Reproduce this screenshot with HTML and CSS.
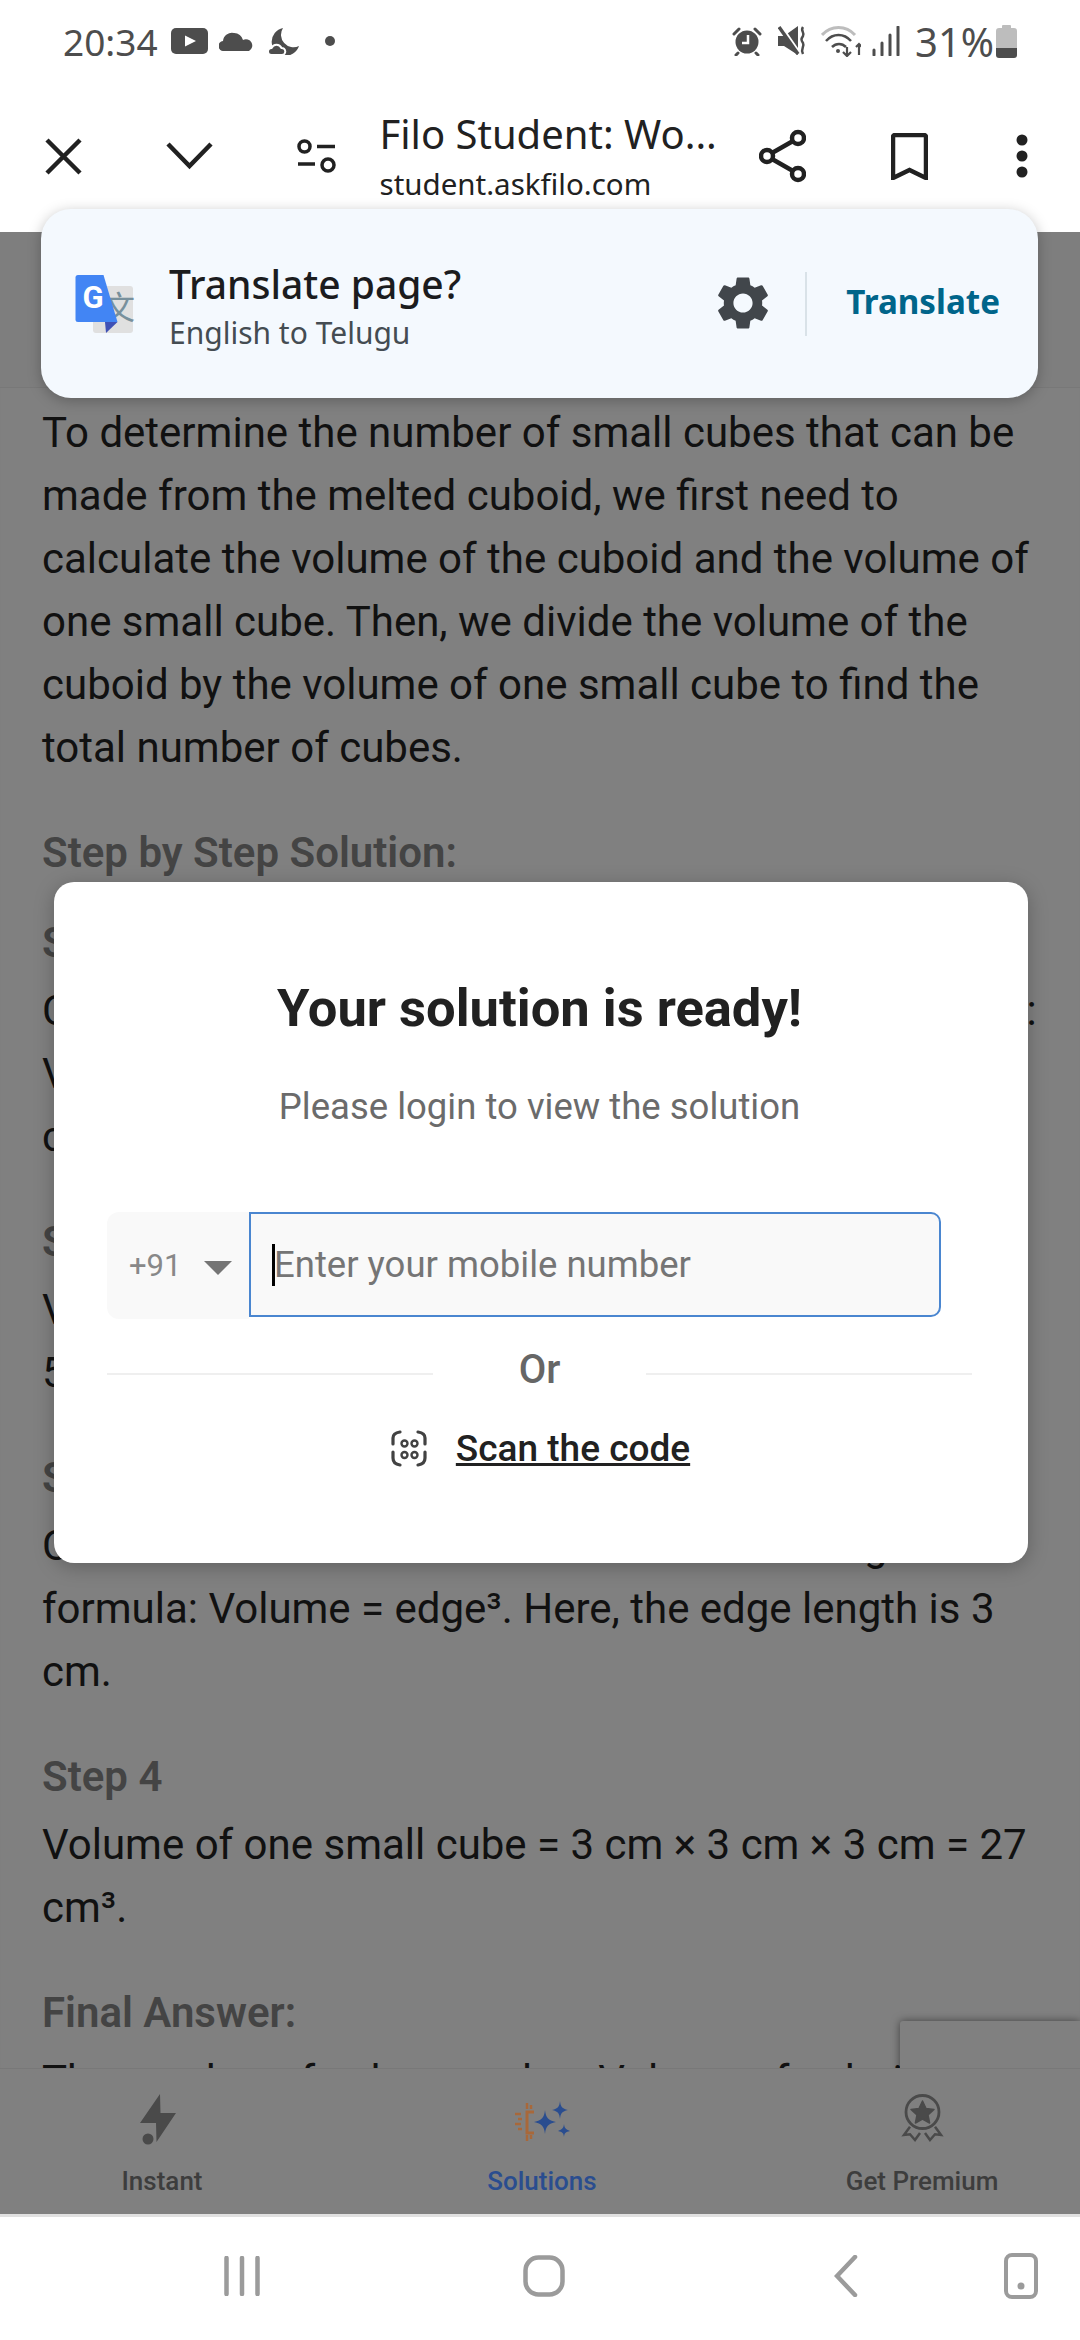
FILE: index.html
```html
<!DOCTYPE html>
<html lang="en">

<head>
    <meta charset="UTF-8">
    <meta name="viewport" content="width=device-width, initial-scale=1.0">
    <title>Filo Student</title>
    <link rel="stylesheet" href="styles.css">
</head>

<body>
    <div class="screen">

        <header class="chrome">
            <div class="status-bar">
                <span class="clock">20:34</span>
                <svg class="st-yt" width="37" height="26" viewBox="0 0 37 26">
                    <rect width="37" height="26" rx="5" fill="#4d4d4d" />
                    <path d="M14 7.500 25 13 14 18.500z" fill="#fff" />
                </svg>
                <svg class="st-cloud" width="35" height="20" viewBox="0 0 35 20">
                    <path d="M5 20a5 5 0 0 1-1-10 9 9 0 0 1 11-8 9 9 0 0 1 9 7 5.500 5.500 0 0 1 6 11z" fill="#4d4d4d" />
                </svg>
                <svg class="st-moon" width="31" height="27" viewBox="0 0 31 27">
                    <path d="M15 0A14 14 0 1 0 31 18 12.500 12.500 0 0 1 15 0z" fill="#4d4d4d" />
                    <path d="M3.500 27a3.500 3.500 0 0 1 0-7 5.500 5.500 0 0 1 10 0 3.500 3.500 0 0 1 .5 7z" fill="#4d4d4d" stroke="#fff" stroke-width="2" />
                </svg>
                <span class="st-dot"></span>

                <svg class="st-alarm" width="30" height="30" viewBox="0 0 30 30">
                    <circle cx="15" cy="16" r="11.500" fill="#4d4d4d" />
                    <path d="M16 9v8h-6" fill="none" stroke="#fff" stroke-width="2.500" />
                    <path d="M2 8 7 3M28 8 23 3M6 27l-2 2M24 27l2 2" stroke="#4d4d4d" stroke-width="3" stroke-linecap="round" />
                </svg>
                <svg class="st-mute" width="29" height="30" viewBox="0 0 29 30">
                    <path d="M0 10h6L20 0v29L6 20H0z" fill="#4d4d4d" />
                    <path d="M3 0l20 29" stroke="#fff" stroke-width="3" />
                    <path d="M1 1l19 27" stroke="#4d4d4d" stroke-width="3.500" />
                    <path d="M25 1c-3 4 2 5 0 9-2 3-2 4 0 7 2 4-3 5 0 11" fill="none" stroke="#4d4d4d" stroke-width="2.500" />
                </svg>
                <svg class="st-wifi" width="40" height="32" viewBox="0 0 40 32">
                    <path d="M1 10C10 0 25 0 34 10" fill="none" stroke="#bdbdbd" stroke-width="3" />
                    <path d="M5 16C12 8 23 8 30 16" fill="none" stroke="#4d4d4d" stroke-width="2.500" />
                    <path d="M11 22c4-4 10-4 14 0" fill="none" stroke="#4d4d4d" stroke-width="2.500" />
                    <circle cx="17" cy="26" r="2" fill="#4d4d4d" />
                    <path d="M26 22v9m-4-4 4 4 4-4M38 30V19m-3 3 3-3 3 3" fill="none" stroke="#4d4d4d" stroke-width="2.200" />
                </svg>
                <svg class="st-signal" width="28" height="30" viewBox="0 0 28 30">
                    <path d="M2 24v5M10 17v12M18 9v20M26 1v28" stroke="#4d4d4d" stroke-width="3" stroke-linecap="round" />
                </svg>
                <span class="battery-pct">31%</span>
                <svg class="st-batt" width="21" height="33" viewBox="0 0 21 33">
                    <path d="M6 3V1a1 1 0 0 1 1-1h7a1 1 0 0 1 1 1v2h3a3 3 0 0 1 3 3v17H0V6a3 3 0 0 1 3-3z" fill="#bdbdbd" />
                    <path d="M0 23h21v7a3 3 0 0 1-3 3H3a3 3 0 0 1-3-3z" fill="#4d4d4d" />
                </svg>
            </div>

            <div class="toolbar">
                <button class="tool">
                    <svg width="37" height="37" viewBox="0 0 37 37">
                        <path d="M2 2l33 33M35 2 2 35" stroke="#212121" stroke-width="4.500" />
                    </svg>
                </button>
                <button class="tool">
                    <svg width="47" height="28" viewBox="0 0 47 28">
                        <path d="M2 2l21.500 22L45 2" fill="none" stroke="#212121" stroke-width="4.500" />
                    </svg>
                </button>
                <button class="tool">
                    <svg width="39" height="34" viewBox="0 0 39 34">
                        <circle cx="7.500" cy="7.500" r="5.500" fill="none" stroke="#212121" stroke-width="3.500" />
                        <circle cx="31" cy="26" r="6" fill="none" stroke="#212121" stroke-width="3.500" />
                        <path d="M20 7.500h18M1 25h17" stroke="#212121" stroke-width="3.500" />
                    </svg>
                </button>
                <div class="page-title">
                    <div class="page-name">Filo Student: Wo...</div>
                    <div class="page-url">student.askfilo.com</div>
                </div>
                <button class="tool">
                    <svg width="47" height="54" viewBox="0 0 47 54">
                        <circle cx="39" cy="9" r="6" fill="none" stroke="#212121" stroke-width="4.500" />
                        <circle cx="8" cy="27" r="6" fill="none" stroke="#212121" stroke-width="4.500" />
                        <circle cx="39" cy="45" r="6" fill="none" stroke="#212121" stroke-width="4.500" />
                        <path d="M13 24 34 12M13 30l21 12" stroke="#212121" stroke-width="4.500" />
                    </svg>
                </button>
                <button class="tool">
                    <svg width="37" height="47" viewBox="0 0 37 47">
                        <path d="M2 45V4a2 2 0 0 1 2-2h29a2 2 0 0 1 2 2v41L18.500 37z" fill="none" stroke="#212121" stroke-width="4.500" />
                    </svg>
                </button>
                <button class="tool tool-last">
                    <svg width="12" height="44" viewBox="0 0 12 44">
                        <circle cx="6" cy="6" r="5.500" fill="#212121" />
                        <circle cx="6" cy="22" r="5.500" fill="#212121" />
                        <circle cx="6" cy="38" r="5.500" fill="#212121" />
                    </svg>
                </button>
            </div>
        </header>

        <div class="page">
            <div class="site-header"></div>
            <main class="article">
                <p>To determine the number of small cubes that can be made from the melted cuboid, we first need to calculate the volume of the cuboid and the volume of one small cube. Then, we divide the volume of the cuboid by the volume of one small cube to find the total number of cubes.</p>
                <h3 class="sol-head">Step by Step Solution:</h3>

                <section class="step step-first">
                    <h4>Step 1</h4>
                    <p>Calculate the volume of the cuboid using the formula:<br>Volume = length × width × height. Here, for the<br>cuboid, the sides are known.</p>
                </section>
                <section class="step">
                    <h4>Step 2</h4>
                    <p>Volume of cuboid = 18 cm × 15 cm × 20 cm =<br>5400 cm³.</p>
                </section>
                <section class="step">
                    <h4>Step 3</h4>
                    <p>Calculate the volume of one small cube using the formula: Volume = edge³. Here, the edge length is 3 cm.</p>
                </section>
                <section class="step">
                    <h4>Step 4</h4>
                    <p>Volume of one small cube = 3 cm × 3 cm × 3 cm = 27 cm³.</p>
                </section>
                <section class="step">
                    <h4>Final Answer:</h4>
                    <p>The number of cubes made = Volume of cuboid / Volume of one small cube.</p>
                </section>
                <div class="recaptcha"></div>
            </main>

            <nav class="tabs">
                <a class="tab">
                    <svg width="70" height="62" viewBox="0 0 70 62">
                        <path d="M33 1 13 30h16l.5 19L49 20H33.500z" fill="#4a4a4a" />
                        <circle cx="21" cy="46" r="5.500" fill="#4a4a4a" />
                    </svg>
                    <span>Instant</span>
                </a>
                <a class="tab tab-on">
                    <svg width="70" height="62" viewBox="0 0 70 62">
                        <path d="M38 17c1 8 3 10 11 12-8 2-10 4-11 12-1-8-3-10-11-12 8-2 10-4 11-12zM53 8c.7 6 2 7.500 8 9-6 1.500-7.300 3-8 9-.7-6-2-7.500-8-9 6-1.500 7.300-3 8-9zM57 31c.5 4 1.500 5 6 7-4.500 1-5.500 2-6 6-.5-4-1.500-5-6-6 4.500-2 5.500-3 6-7z" fill="#2a4d8f" />
                        <path d="M27 19h-7v21h7" fill="none" stroke="#a8683a" stroke-width="3" />
                        <path d="M20 10v6M24 12v4M8 21h6M11 26h4M8 31h6M11 36h4M20 42v6M24 42v4" stroke="#a8683a" stroke-width="2.500" />
                    </svg>
                    <span>Solutions</span>
                </a>
                <a class="tab">
                    <svg width="70" height="62" viewBox="0 0 70 62">
                        <circle cx="35.500" cy="19" r="16.500" fill="none" stroke="#4a4a4a" stroke-width="2.800" />
                        <path d="M35.500 8l3.500 7.500 8 1-6 5.500 1.600 8-7.100-4-7.100 4 1.600-8-6-5.500 8-1z" fill="#4a4a4a" stroke="#4a4a4a" stroke-width="1.500" stroke-linejoin="round" />
                        <path d="M23 33.700 17 42l6-.7L28 47l5-7M48 33.700 54 42l-6-.7L43 47l-5-7" fill="none" stroke="#4a4a4a" stroke-width="2.500" />
                    </svg>
                    <span>Get Premium</span>
                </a>
            </nav>

            <div class="translate-bar">
                <svg class="tr-logo" width="90" height="85" viewBox="0 0 90 85">
                    <rect x="33" y="25" width="40" height="47" rx="3" fill="#e0e0e0" />
                    <text class="tr-han" x="59" y="58" text-anchor="middle">文</text>
                    <path d="M45 61h12.500L46 72z" fill="#3f51b5" />
                    <path d="M18 14h25.500L57.500 61H18a2.500 2.500 0 0 1-2.500-2.500V16.500A2.500 2.500 0 0 1 18 14z" fill="#4285f4" />
                    <text class="tr-g" x="33" y="47" text-anchor="middle">G</text>
                </svg>
                <div class="tr-text">
                    <div class="tr-title">Translate page?</div>
                    <div class="tr-sub">English to Telugu</div>
                </div>
                <svg class="tr-gear" width="64" height="64" viewBox="0 0 24 24">
                    <path fill="#41464b" d="M19.140 12.940c.04-.3.06-.61.06-.94 0-.32-.02-.64-.07-.94l2.030-1.580c.18-.14.23-.41.12-.61l-1.920-3.320c-.12-.22-.37-.29-.59-.22l-2.390.96c-.5-.38-1.030-.7-1.620-.94l-.36-2.540c-.04-.24-.24-.41-.48-.41h-3.840c-.24 0-.43.17-.47.41l-.36 2.540c-.59.24-1.130.57-1.620.94l-2.390-.96c-.22-.08-.47 0-.59.22L2.740 8.870c-.12.21-.08.47.12.61l2.030 1.580c-.05.3-.09.63-.09.94s.02.64.07.94l-2.030 1.580c-.18.14-.23.41-.12.61l1.920 3.320c.12.22.37.29.59.22l2.390-.96c.5.38 1.030.7 1.620.94l.36 2.540c.05.24.24.41.48.41h3.840c.24 0 .44-.17.47-.41l.36-2.540c.59-.24 1.130-.56 1.620-.94l2.390.96c.22.08.47 0 .59-.22l1.920-3.320c.12-.22.07-.47-.12-.61l-2.010-1.580zM12 15.600c-1.980 0-3.600-1.620-3.600-3.600s1.620-3.600 3.600-3.600 3.600 1.620 3.600 3.600-1.620 3.600-3.600 3.600z" />
                </svg>
                <span class="tr-divider"></span>
                <span class="tr-btn">Translate</span>
            </div>

            <div class="modal">
                <h2 class="modal-title">Your solution is ready!</h2>
                <p class="modal-sub">Please login to view the solution</p>
                <div class="phone-row">
                    <div class="country">
                        <span>+91</span>
                        <i class="country-arrow"></i>
                    </div>
                    <div class="phone-input">
                        <i class="caret"></i>
                        <span>Enter your mobile number</span>
                    </div>
                </div>
                <div class="or-row">
                    <span class="or-line"></span>
                    <span class="or-text">Or</span>
                    <span class="or-line"></span>
                </div>
                <div class="scan-row">
                    <svg width="50" height="50" viewBox="0 0 50 50">
                        <path d="M9 21v-6q0-5 7-6M41 21v-6q0-5-7-6M9 29v6q0 6 7 7M41 29v6q0 6-7 7" fill="none" stroke="#424242" stroke-width="3.200" stroke-linecap="round" />
                        <g fill="none" stroke="#424242" stroke-width="2.400">
                            <circle cx="20.500" cy="20.500" r="3" />
                            <circle cx="30.500" cy="20.500" r="3" />
                            <circle cx="20.500" cy="32" r="3" />
                            <circle cx="30.500" cy="32" r="3" />
                        </g>
                    </svg>
                    <a class="scan-link">Scan the code</a>
                </div>
            </div>
        </div>

        <footer class="sys-nav">
            <svg width="36" height="40" viewBox="0 0 36 40">
                <path d="M2.500 2v36M18 2v36M33.500 2v36" stroke="#9b9b9b" stroke-width="4.500" stroke-linecap="round" />
            </svg>
            <svg width="42" height="42" viewBox="0 0 42 42">
                <rect x="2.500" y="2.500" width="37" height="37" rx="13" fill="none" stroke="#9b9b9b" stroke-width="4.500" />
            </svg>
            <svg width="24" height="42" viewBox="0 0 24 42">
                <path d="M21 2 3 21l18 19" fill="none" stroke="#9b9b9b" stroke-width="4.500" stroke-linecap="round" />
            </svg>
            <svg width="34" height="46" viewBox="0 0 34 46">
                <rect x="2" y="2" width="30" height="42" rx="6" fill="none" stroke="#9b9b9b" stroke-width="4" />
                <circle cx="17" cy="33" r="3.500" fill="#9b9b9b" />
            </svg>
        </footer>

    </div>
</body>

</html>
```

FILE: styles.css
```css
* {
    box-sizing: border-box;
}

body {
    margin: 0;
    font-family: Roboto, "Noto Sans", sans-serif;
}

h2,
h3,
h4,
p {
    margin: 0;
}

.screen {
    width: 1080px;
    height: 2340px;
    display: flex;
    flex-direction: column;
    overflow: hidden;
    background: #fff;
}

/* browser chrome */
.chrome {
    height: 232px;
    flex: none;
    background: #fff;
    font-family: "Noto Sans", sans-serif;
}

.status-bar {
    height: 82px;
    display: flex;
    align-items: center;
    padding-left: 63px;
    color: #4d4d4d;
}

.clock {
    font-size: 37px;
    width: 108px;
}

.st-cloud {
    margin-left: 11px;
}

.st-moon {
    margin-left: 14px;
}

.st-dot {
    width: 10px;
    height: 10px;
    border-radius: 50%;
    background: #4d4d4d;
    margin-left: 26px;
}

.st-alarm {
    margin-left: 397px;
}

.st-mute {
    margin-left: 16px;
}

.st-wifi {
    margin-left: 14px;
}

.st-signal {
    margin-left: 11px;
}

.battery-pct {
    font-size: 40px;
    margin-left: 15px;
    width: 81px;
}

.toolbar {
    height: 150px;
    display: flex;
    align-items: center;
    padding-bottom: 2px;
}

.tool {
    width: 126.500px;
    height: 100px;
    padding: 0;
    border: 0;
    background: none;
    display: flex;
    align-items: center;
    justify-content: center;
}

.tool-last {
    width: 98px;
}

.page-title {
    width: 340px;
    color: #212121;
    white-space: nowrap;
}

.page-name {
    font-size: 40px;
    line-height: 52px;
}

.page-url {
    font-size: 29.500px;
    line-height: 42px;
    margin-top: 3px;
}

/* page behind the dialog */
.page {
    flex: 1;
    position: relative;
    display: flex;
    flex-direction: column;
    min-height: 0;
    background: #808080;
    border-bottom: 3px solid #e0e0e0;
    box-shadow: inset 0 6px 6px -6px rgba(0, 0, 0, .25);
}

.site-header {
    height: 156px;
    flex: none;
    background: #7e7e7e;
    border-bottom: 1px solid #787878;
}

.article {
    flex: 1;
    position: relative;
    overflow: hidden;
    padding: 13px 42px 0;
    font-size: 42px;
    line-height: 63px;
    color: #111;
}

.sol-head {
    margin-top: 42px;
}

.sol-head,
.step h4 {
    font-size: 42px;
    font-weight: 600;
    line-height: 63px;
    color: #444;
}

.step {
    margin-top: 42px;
}

.step-first {
    margin-top: 27px;
}

.step h4 {
    margin-bottom: 5px;
}

.recaptcha {
    position: absolute;
    top: 1633px;
    right: 0;
    width: 180px;
    height: 120px;
    background: #808080;
    border-radius: 3px 0 0 0;
    box-shadow: 0 0 8px rgba(0, 0, 0, .5);
}

.tabs {
    height: 146px;
    flex: none;
    position: relative;
    display: flex;
    justify-content: space-between;
    padding: 0 33px 0 37px;
    background: #808080;
    border-top: 1px solid #787878;
}

.tab {
    width: 250px;
    display: flex;
    flex-direction: column;
    align-items: center;
    padding-top: 24px;
    font-size: 26px;
    font-weight: 500;
    color: #3d3d3d;
}

.tab span {
    margin-top: 10px;
    line-height: 32px;
}

.tab-on {
    color: #2a4d8f;
}

/* translate prompt */
.translate-bar {
    position: absolute;
    top: -23px;
    left: 41px;
    width: 997px;
    height: 189px;
    display: flex;
    align-items: center;
    padding: 0 38px 0 19px;
    background: #f4f9fe;
    border-radius: 30px;
    box-shadow: 0 3px 14px rgba(0, 0, 0, .25);
    font-family: "Noto Sans", sans-serif;
}

.tr-han {
    font-family: "Noto Sans CJK SC", sans-serif;
    font-size: 32px;
    fill: #78909c;
}

.tr-g {
    font-family: Roboto, sans-serif;
    font-size: 31px;
    font-weight: 700;
    fill: #fff;
}

.tr-text {
    flex: 1;
    margin-left: 19px;
    margin-top: 5px;
}

.tr-title {
    font-size: 39px;
    font-weight: 500;
    line-height: 50px;
    color: #1b1c1e;
}

.tr-sub {
    font-size: 30px;
    line-height: 42px;
    margin-top: 3px;
    color: #444c52;
}

.tr-gear {
    margin-bottom: 2px;
}

.tr-divider {
    width: 2px;
    height: 64px;
    margin-left: 30px;
    background: #d9e2e8;
}

.tr-btn {
    margin-left: 39px;
    margin-bottom: 5px;
    font-size: 33.200px;
    font-weight: 700;
    color: #00658a;
}

/* login dialog */
.modal {
    position: absolute;
    top: 650px;
    left: 54px;
    width: 974px;
    height: 681px;
    padding: 96px 0 0 53px;
    background: #fff;
    border-radius: 20px;
    box-shadow: 0 4px 20px rgba(0, 0, 0, .25);
}

.modal-title {
    width: 865px;
    font-size: 52.500px;
    font-weight: 700;
    line-height: 60px;
    text-align: center;
    color: #212121;
}

.modal-sub {
    width: 865px;
    margin-top: 44px;
    font-size: 36.500px;
    line-height: 50px;
    text-align: center;
    color: #6b6b6b;
}

.phone-row {
    display: flex;
    margin-top: 80px;
    width: 834px;
    align-items: flex-start;
}

.country {
    width: 142px;
    height: 107px;
    display: flex;
    align-items: center;
    padding-left: 22px;
    background: #f9f9f9;
    border-radius: 12px 0 0 12px;
    font-size: 31px;
    color: #888;
}

.country-arrow {
    width: 0;
    height: 0;
    margin-left: 23px;
    margin-top: 4px;
    border-left: 14px solid transparent;
    border-right: 14px solid transparent;
    border-top: 14px solid #757575;
}

.phone-input {
    flex: 1;
    height: 105px;
    display: flex;
    align-items: center;
    padding-left: 21px;
    background: #f9f9f9;
    border: 2px solid #4a86d0;
    border-radius: 0 10px 10px 0;
    font-size: 36.500px;
    color: #757575;
}

.caret {
    width: 3px;
    height: 42px;
    margin-right: -1px;
    background: #000;
}

.or-row {
    width: 865px;
    margin-top: 30px;
    display: flex;
    align-items: center;
    justify-content: space-between;
}

.or-line {
    width: 326px;
    height: 2px;
    margin-top: 8px;
    background: #efefef;
}

.or-text {
    font-size: 40px;
    font-weight: 500;
    line-height: 42px;
    color: #666;
}

.scan-row {
    width: 860px;
    margin-top: 32px;
    display: flex;
    align-items: center;
    justify-content: center;
    gap: 22px;
}

.scan-link {
    font-size: 37px;
    font-weight: 500;
    text-decoration: underline;
    color: #212121;
}

/* android nav */
.sys-nav {
    height: 123px;
    flex: none;
    display: flex;
    align-items: center;
    padding: 0 0 5px 224px;
    background: #fff;
}

.sys-nav svg:nth-child(2) {
    margin-left: 263px;
}

.sys-nav svg:nth-child(3) {
    margin-left: 269px;
}

.sys-nav svg:nth-child(4) {
    margin-left: 146px;
}
```
